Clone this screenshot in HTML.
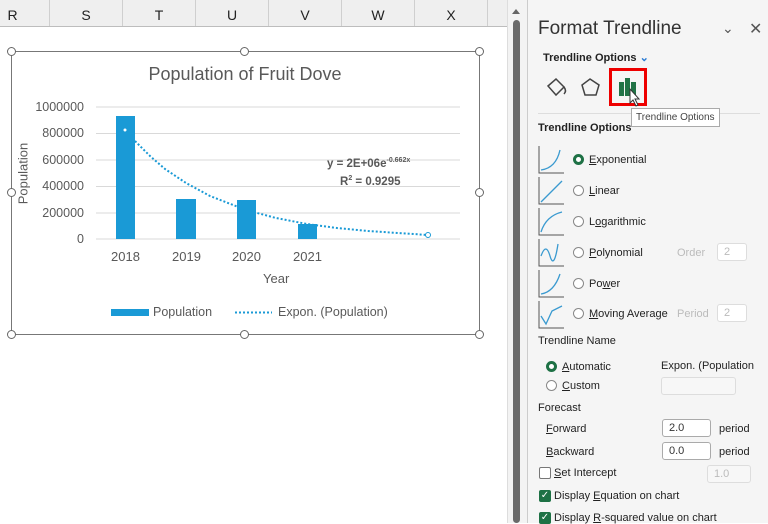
<!DOCTYPE html><html><head><style>
*{margin:0;padding:0;box-sizing:border-box}
body{width:768px;height:523px;overflow:hidden;background:#fff;font-family:"Liberation Sans",sans-serif;position:relative}
.a{position:absolute;white-space:nowrap}
.hdr{left:0;top:0;width:508px;height:27px;background:#efefef;border-bottom:1px solid #bdbdbd}
.col{top:0;height:26px;border-left:1px solid #cfcfcf;font-size:14px;color:#222;line-height:30px;text-align:center;width:73px}
.p{font-size:11px;color:#222}
.rad{width:11px;height:11px;border:1px solid #888;border-radius:50%;background:#fff}
.rad.on{border:3px solid #1e7145}
.box{height:18px;border:1px solid #aaa;border-radius:3px;background:#fff;font-size:11px;padding:2px 6px;color:#333}
.cb{width:12px;height:12px;border-radius:2px;background:#1e7145;color:#fff;font-size:10px;line-height:12px;text-align:center}
.h{width:9px;height:9px;border:1.5px solid #666;border-radius:50%;background:#fff}
.g{font-size:12.5px;color:#595959}
</style></head><body>
<div class="a hdr"></div>
<div class="a col" style="left:-24px;border:0">R</div>
<div class="a col" style="left:49px">S</div>
<div class="a col" style="left:122px">T</div>
<div class="a col" style="left:195px">U</div>
<div class="a col" style="left:268px">V</div>
<div class="a col" style="left:341px">W</div>
<div class="a col" style="left:414px">X</div>
<div class="a" style="left:487px;top:0;width:1px;height:26px;background:#cfcfcf"></div>
<div class="a" style="left:507px;top:0;width:20px;height:523px;background:#f3f3f3;border-left:1px solid #ddd"></div>
<div class="a" style="left:512px;top:9px;width:0;height:0;border-left:4px solid transparent;border-right:4px solid transparent;border-bottom:5px solid #666"></div>
<div class="a" style="left:513px;top:20px;width:7px;height:503px;background:#6a6a6a;border-radius:4px"></div>
<div class="a" style="left:527px;top:0;width:241px;height:523px;background:#f5f5f5;border-left:1px solid #ccc"></div>

<!-- chart -->
<div class="a" style="left:11px;top:51px;width:469px;height:284px;border:1.5px solid #777"></div>
<div class="a h" style="left:7px;top:47px"></div><div class="a h" style="left:240px;top:47px"></div><div class="a h" style="left:475px;top:47px"></div>
<div class="a h" style="left:7px;top:188px"></div><div class="a h" style="left:475px;top:188px"></div>
<div class="a h" style="left:7px;top:330px"></div><div class="a h" style="left:240px;top:330px"></div><div class="a h" style="left:475px;top:330px"></div>
<div class="a" style="left:0;top:64px;width:490px;text-align:center;font-size:18px;color:#595959">Population of Fruit Dove</div>
<svg class="a" style="left:0;top:0" width="505" height="340">
<g stroke="#d9d9d9" stroke-width="1">
<line x1="96" y1="107" x2="460" y2="107"/><line x1="96" y1="133.5" x2="460" y2="133.5"/><line x1="96" y1="160" x2="460" y2="160"/><line x1="96" y1="186.5" x2="460" y2="186.5"/><line x1="96" y1="213" x2="460" y2="213"/><line x1="96" y1="239" x2="460" y2="239"/></g>
<g fill="#1a9ad6"><rect x="116" y="116" width="19" height="123"/><rect x="176" y="199" width="20" height="40"/><rect x="237" y="200" width="19" height="39"/><rect x="298" y="224" width="19" height="15"/>
<rect x="111" y="309" width="38" height="7"/></g>
<circle cx="125" cy="130" r="1.5" fill="#fff"/>
<polyline fill="none" stroke="#1a9ad6" stroke-width="2" stroke-dasharray="2,2" points="135,141 150,156 165,169 186,183 210,196 246,210 276,218 307,224 337,228 368,231 398,233 428,235"/>
<circle cx="428" cy="235" r="2.5" fill="#fff" stroke="#1a9ad6"/>
<line x1="235" y1="312.5" x2="272" y2="312.5" stroke="#1a9ad6" stroke-width="2" stroke-dasharray="2,2"/>
</svg>
<div class="a g" style="left:30px;top:94px;width:54px;text-align:right;line-height:26.4px">1000000<br>800000<br>600000<br>400000<br>200000<br>0</div>
<div class="a g" style="left:-22px;top:166px;transform:rotate(-90deg);width:90px;text-align:center;font-size:13px">Population</div>
<div class="a g" style="left:111px;top:249px;font-size:13px">2018</div>
<div class="a g" style="left:172px;top:249px;font-size:13px">2019</div>
<div class="a g" style="left:232px;top:249px;font-size:13px">2020</div>
<div class="a g" style="left:293px;top:249px;font-size:13px">2021</div>
<div class="a g" style="left:263px;top:271px;font-size:13px">Year</div>
<div class="a" style="left:327px;top:157px;font-size:11.5px;font-weight:bold;color:#595959">y = 2E+06e<sup style="font-size:7px">-0.662x</sup></div>
<div class="a" style="left:340px;top:175px;font-size:11.5px;font-weight:bold;color:#595959">R<sup style="font-size:7px">2</sup> = 0.9295</div>
<div class="a g" style="left:153px;top:305px">Population</div>
<div class="a g" style="left:278px;top:305px">Expon. (Population)</div>

<!-- panel -->
<div class="a" style="left:538px;top:18px;font-size:19px;color:#333">Format Trendline</div>
<div class="a" style="left:722px;top:20px;font-size:14px;color:#555">&#8964;</div>
<div class="a" style="left:749px;top:19px;font-size:16px;color:#555">✕</div>
<div class="a p" style="left:543px;top:51px;font-weight:bold">Trendline Options <span style="color:#2b7cd3">&#8964;</span></div>
<svg class="a" style="left:542px;top:74px" width="110" height="30">
<path d="M6 12 L14 5 L22 13 L14 21 Z" fill="none" stroke="#444" stroke-width="1.5"/><path d="M22 13 q3 4 0 7" fill="none" stroke="#444" stroke-width="1.5"/>
<path d="M48 5 L57 11 L54 21 L43 21 L40 11 Z" fill="none" stroke="#444" stroke-width="1.5"/>
<rect x="77" y="8" width="5" height="14" fill="#217346"/><rect x="83" y="4" width="5" height="18" fill="#217346"/><rect x="89" y="8" width="5" height="14" fill="#217346"/>
</svg>
<div class="a" style="left:538px;top:113px;width:222px;height:1px;background:#ddd"></div>
<div class="a" style="left:609px;top:68px;width:38px;height:38px;border:3px solid #e00"></div>
<svg class="a" style="left:628px;top:88px" width="14" height="20"><path d="M2 1 L2 15 L5 12 L8 18 L10 17 L7 11 L11 11 Z" fill="#fff" stroke="#333"/></svg>
<div class="a" style="left:631px;top:108px;border:1px solid #aaa;background:#fff;font-size:10px;padding:3px 4px;color:#444">Trendline Options</div>
<div class="a p" style="left:538px;top:122px;font-weight:bold">Trendline Options</div>
<svg class="a" style="left:538px;top:146px" width="28" height="185" fill="none" stroke-width="1">
<g stroke="#555"><path d="M1 0v27h25M1 31v27h25M1 62v27h25M1 93v27h25M1 124v27h25M1 155v27h25"/></g>
<g stroke="#3a9ad0" stroke-width="1.3"><path d="M3 24 Q18 22 22 4"/><path d="M3 56 L24 35"/><path d="M3 86 Q8 70 24 66"/><path d="M3 110 Q8 96 12 110 Q16 124 20 98"/><path d="M3 148 Q16 146 22 128"/><path d="M3 170 L8 178 L14 165 L24 160"/></g>
</svg>
<div class="a rad on" style="left:573px;top:154px"></div><div class="a p" style="left:589px;top:154px"><u>E</u>xponential</div>
<div class="a rad" style="left:573px;top:185px"></div><div class="a p" style="left:589px;top:185px"><u>L</u>inear</div>
<div class="a rad" style="left:573px;top:216px"></div><div class="a p" style="left:589px;top:216px">L<u>o</u>garithmic</div>
<div class="a rad" style="left:573px;top:247px"></div><div class="a p" style="left:589px;top:247px"><u>P</u>olynomial</div>
<div class="a p" style="left:677px;top:247px;color:#bbb">Order</div><div class="a box" style="left:717px;top:243px;width:30px;color:#bbb;border-color:#ddd">2</div>
<div class="a rad" style="left:573px;top:278px"></div><div class="a p" style="left:589px;top:278px">Po<u>w</u>er</div>
<div class="a rad" style="left:573px;top:308px"></div><div class="a p" style="left:589px;top:308px"><u>M</u>oving Average</div>
<div class="a p" style="left:677px;top:308px;color:#bbb">Period</div><div class="a box" style="left:717px;top:304px;width:30px;color:#bbb;border-color:#ddd">2</div>
<div class="a p" style="left:538px;top:335px">Trendline Name</div>
<div class="a rad on" style="left:546px;top:361px"></div><div class="a p" style="left:562px;top:361px"><u>A</u>utomatic</div>
<div class="a p" style="left:661px;top:360px">Expon. (Population</div>
<div class="a rad" style="left:546px;top:380px"></div><div class="a p" style="left:562px;top:380px"><u>C</u>ustom</div>
<div class="a box" style="left:661px;top:377px;width:75px;border-color:#ddd;background:#f7f7f7"></div>
<div class="a p" style="left:538px;top:402px">Forecast</div>
<div class="a p" style="left:546px;top:423px"><u>F</u>orward</div><div class="a box" style="left:662px;top:419px;width:49px">2.0</div><div class="a p" style="left:719px;top:423px">period</div>
<div class="a p" style="left:546px;top:446px"><u>B</u>ackward</div><div class="a box" style="left:662px;top:442px;width:49px">0.0</div><div class="a p" style="left:719px;top:446px">period</div>
<div class="a" style="left:539px;top:467px;width:12px;height:12px;border:1px solid #777;background:#fff;border-radius:2px"></div><div class="a p" style="left:554px;top:467px"><u>S</u>et Intercept</div>
<div class="a box" style="left:707px;top:465px;width:44px;color:#bbb;border-color:#ddd;background:#f7f7f7">1.0</div>
<div class="a cb" style="left:539px;top:490px">✓</div><div class="a p" style="left:554px;top:490px">Display <u>E</u>quation on chart</div>
<div class="a cb" style="left:539px;top:512px">✓</div><div class="a p" style="left:554px;top:512px">Display <u>R</u>-squared value on chart</div>
</body></html>
